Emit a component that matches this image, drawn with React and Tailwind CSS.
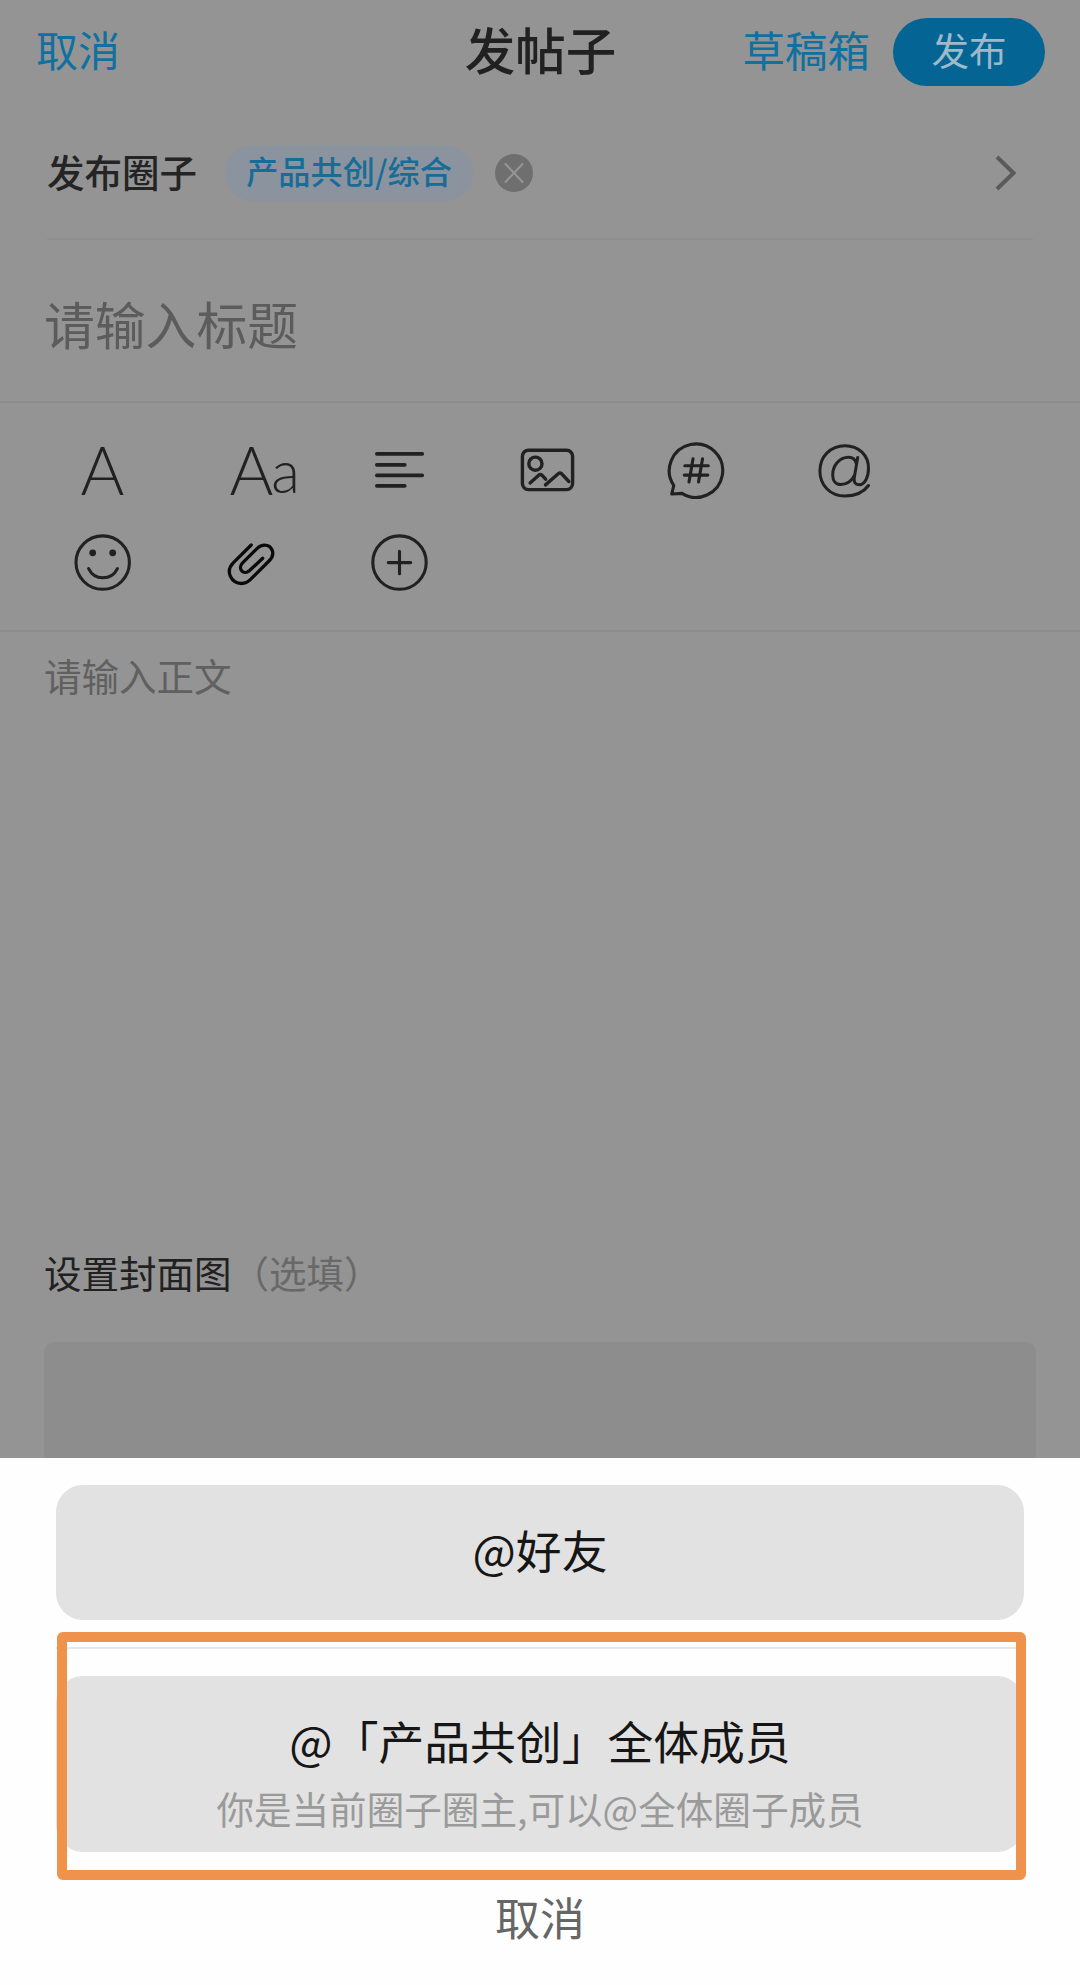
/**
 * @fileoverview Pantalla para publicar un post con el menú inferior de menciones abierto
 */

import React from 'react';

const INK = '#212121';

/**
 * Contenedor de los iconos de la barra, con el trazo común
 */
const ToolIcon = ({ children, color = INK, strokeWidth = 3.4 }) => (
  <svg
    className="w-[60px] h-[60px]"
    viewBox="0 0 60 60"
    fill="none"
    stroke={color}
    strokeWidth={strokeWidth}
    strokeLinecap="round"
    strokeLinejoin="round"
  >
    {children}
  </svg>
);

const AlignIcon = () => (
  <ToolIcon strokeWidth={3.6}>
    <path d="M6.8 12.9h45.5M6.8 23.9h28M6.8 34.4h45.5M6.8 44.9h28" />
  </ToolIcon>
);

const ImageIcon = () => (
  <ToolIcon>
    <rect x="4.4" y="9.2" width="50.2" height="39.4" rx="6" />
    <circle cx="17.4" cy="22.7" r="6.6" />
    <path d="M12.1 41.9l8.6-7.7q1.8-1.4 3.5.2l3.4 3.8" />
    <path d="M27.5 43.9l12.7-11.2q1.8-1.5 3.5.1l7.2 7.7" />
  </ToolIcon>
);

const TopicIcon = () => (
  <ToolIcon strokeWidth={3.1}>
    <path d="M15 52.4A26.7 26.7 0 1 0 6.8 44.5L4.7 53z" />
    <path d="M26 17.9l-4 23M35.5 17.9l-4 23M17.8 24.7h23.5M17.3 34.1h23.5" />
  </ToolIcon>
);

const MentionIcon = () => (
  <ToolIcon strokeWidth={3}>
    <path d="M53.5 44.5C48.5 51.3 40 55 30 55C15 55 4.9 44 4.9 30C4.9 15.5 15.5 4.7 30 4.7C44 4.7 53.5 14.5 53.5 27C53.5 36 50 43.7 44.1 43.7C40.1 43.7 38.5 40.9 39.3 36.5L42.7 16.5" />
    <path d="M41.3 22.3C40.3 18.5 37.1 16.3 33.5 16.3C24 16.3 17.7 25 17.7 33.9C17.7 39.9 20.8 43.5 25.7 43.5C31.8 43.5 37.1 39.7 39.3 34.7" />
  </ToolIcon>
);

const SmileIcon = () => (
  <ToolIcon strokeWidth={3.1}>
    <circle cx="29.7" cy="29.6" r="26.7" />
    <circle cx="19.7" cy="19.8" r="3.4" fill={INK} stroke="none" />
    <circle cx="39.7" cy="19.8" r="3.4" fill={INK} stroke="none" />
    <path d="M15.6 35.6C18.5 41.6 23.6 44.8 29.8 44.8S41.5 41.6 44.4 35.6" />
  </ToolIcon>
);

const ClipIcon = () => (
  <ToolIcon color="#0a0a0a" strokeWidth={3.3}>
    <path d="M30.2 12L12.2 29.8C3.8 38.5 10.5 50.5 20.5 50.5C24.2 50.5 27 49 29.3 46.7L48 28C55.3 21 50.8 12.1 43.5 12.1C40.5 12.1 38.2 13.3 36.2 15.3L21.8 29.7C15.8 35.7 22.8 42.7 28.3 37.8L41.7 25.3" />
  </ToolIcon>
);

const PlusIcon = () => (
  <ToolIcon strokeWidth={3.1}>
    <circle cx="29.5" cy="29.6" r="26.7" />
    <path d="M29.5 18.4v22.4M18.3 29.6h22.4" />
  </ToolIcon>
);

const LetterIcon = () => (
  <span className="w-[59px] h-[65px] text-center font-[Lato] font-light text-[67px] leading-[60px] text-[#212121]">A</span>
);

const FontSizeIcon = () => (
  <span className="flex items-baseline h-[65px] pl-[8px] font-[Lato] font-light leading-[60px] text-[#212121]">
    <span className="text-[67px]">A</span>
    <span className="relative -top-[2px] -ml-[2px] text-[59px] leading-[60px]">a</span>
  </span>
);

const TOOLS = [
  LetterIcon,
  FontSizeIcon,
  AlignIcon,
  ImageIcon,
  TopicIcon,
  MentionIcon,
  SmileIcon,
  ClipIcon,
  PlusIcon
];

/**
 * Cabecera con cancelar, título, borradores y publicar
 */
const Header = () => (
  <header className="grid grid-cols-[1fr_auto_1fr] items-center h-[104px] pl-[36px] pr-[35px]">
    <button className="justify-self-start pb-[7px] text-[42px] leading-[60px] text-[#10709f]">取消</button>
    <h1 className="pb-[8px] text-[50.5px] leading-[60px] font-medium text-[#212121]">发帖子</h1>
    <div className="flex items-center justify-self-end">
      <button className="pb-[7px] text-[42.5px] leading-[60px] text-[#10709f]">草稿箱</button>
      <button className="ml-[23px] w-[152px] h-[68px] pb-[6px] rounded-full bg-[#046493] text-[37.5px] leading-[60px] text-[#9fb9ca]">
        发布
      </button>
    </div>
  </header>
);

/**
 * Fila con el círculo elegido
 */
const CircleRow = () => (
  <div className="flex items-center h-[136px] mx-[47px] pt-[4px] border-b-2 border-[#8f8f8f]">
    <span className="pb-[5px] text-[37.5px] leading-[60px] font-medium text-[#242424]">发布圈子</span>
    <span className="ml-[28px] w-[248px] h-[56px] rounded-full bg-[#8b939e] text-center text-[32.2px] leading-[50px] font-medium text-[#176c98]">
      产品共创/综合
    </span>
    <svg className="ml-[22px] w-[38px] h-[38px]" viewBox="0 0 38 38" fill="none">
      <circle cx="19" cy="19" r="19" fill="#6f6f6f" />
      <path d="M10.5 10l17 18M27.5 10l-17 18" stroke="#969696" strokeWidth="2" strokeLinecap="round" />
    </svg>
    <svg className="ml-auto mr-[15px] w-[24px] h-[38px]" viewBox="0 0 24 38" fill="none">
      <path d="M3 3l16.5 16L3 35" stroke="#5a5a5a" strokeWidth="4" />
    </svg>
  </div>
);

/**
 * Menú inferior con las opciones de mención
 */
const MentionSheet = () => (
  <section className="h-[527px] px-[56px] pt-[27px] bg-[#fefefe] flex flex-col">
    <button className="h-[135px] shrink-0 pb-[6px] rounded-[27px] bg-[#e2e2e2] text-[45.8px] text-[#161616]">@好友</button>
    <div className="relative mt-[27px] h-[205px] shrink-0 border-t-2 border-[#e7e7e7] pt-[27px]">
      <button className="flex flex-col items-center w-full h-[176px] pt-[31px] rounded-[27px] bg-[#e2e2e2]">
        <span className="text-[45.8px] leading-[66px] text-[#161616]">@「产品共创」全体成员</span>
        <span className="mt-[7px] text-[37.6px] leading-[56px] text-[#9a9a9a]">
          你是当前圈子圈主,可以@全体圈子成员
        </span>
      </button>
      {/* Marco que resalta la opción */}
      <div className="absolute -top-[17px] left-[1px] -right-[2px] h-[248px] rounded-[6px] border-[10.5px] border-[#ee924c]" />
    </div>
    <button className="mt-[32px] self-center text-[45px] leading-[66px] text-[#666666]">取消</button>
  </section>
);

const App = () => {
  return (
    <div className="w-[1080px] h-[1985px] overflow-hidden flex flex-col bg-[#949494] font-['Noto_Sans_CJK_SC',sans-serif]">
      <Header />
      <CircleRow />

      {/* Título */}
      <div className="h-[163px] px-[44px] pt-[46px] border-b-2 border-[#8b8b8b] text-[50.8px] leading-[74px] text-[#5c5c5c]">
        请输入标题
      </div>

      {/* Barra de herramientas */}
      <div className="grid grid-cols-[repeat(6,148.4px)] auto-rows-[60px] gap-y-[32px] h-[229px] pl-[73px] pt-[38px] border-b-2 border-[#8c8c8c]">
        {TOOLS.map((Tool, index) => (
          <div key={index} className="flex items-center whitespace-nowrap">
            <Tool />
          </div>
        ))}
      </div>

      {/* Cuerpo */}
      <div className="flex-1 px-[44px] pt-[15px] text-[37.5px] leading-[56px] text-[#606060]">请输入正文</div>

      {/* Portada */}
      <div className="h-[214px] px-[44px] flex flex-col">
        <p className="text-[37.5px] leading-[56px] text-[#212121]">
          设置封面图<span className="text-[#686868]">（选填）</span>
        </p>
        <div className="mt-[42px] flex-1 rounded-t-[10px] bg-[#8d8d8d]" />
      </div>

      <MentionSheet />
    </div>
  );
};

export default App;
